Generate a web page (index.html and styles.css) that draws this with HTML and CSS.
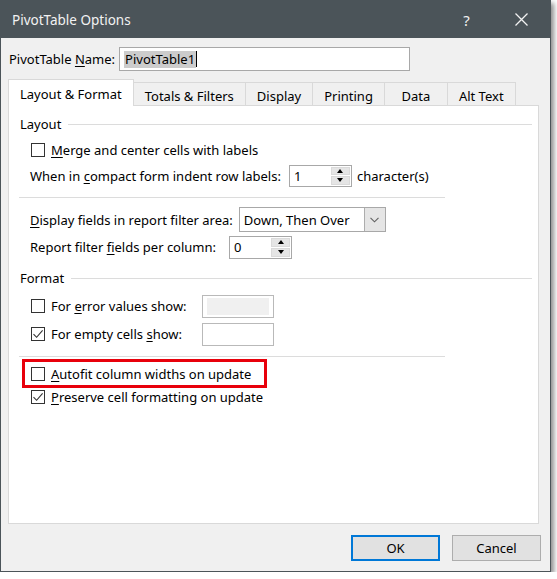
FILE: index.html
```html
<!DOCTYPE html>
<html>
<head>
<meta charset="utf-8">
<title>PivotTable Options</title>
<link rel="stylesheet" href="styles.css">
</head>
<body>
<div class="dialog">
  <div class="titlebar">
    <span class="title">PivotTable Options</span>
    <span class="caption-btn help">?</span>
    <span class="caption-btn close">
      <svg width="13" height="13" viewBox="0 0 13 13"><path d="M0.5 0.5 L12.5 12.5 M12.5 0.5 L0.5 12.5" stroke="#f2f2f2" stroke-width="1.3" fill="none"/></svg>
    </span>
  </div>
  <div class="content">
    <div class="name-row">
      <span class="name-label">PivotTable <u>N</u>ame:</span>
      <div class="name-box"><span class="selected">PivotTable1</span><span class="caret"></span></div>
    </div>
    <div class="tabs">
      <div class="tab active">Layout &amp; Format</div>
      <div class="tab">Totals &amp; Filters</div>
      <div class="tab">Display</div>
      <div class="tab">Printing</div>
      <div class="tab">Data</div>
      <div class="tab">Alt Text</div>
    </div>
    <div class="panel">
      <div class="group-head"><span>Layout</span><span class="rule"></span></div>
      <div class="row check-row merge-row"><span class="checkbox"></span><span><u>M</u>erge and center cells with labels</span></div>
      <div class="row text-row compact-row">
        <span>When in <u>c</u>ompact form indent row labels:</span>
        <div class="spinner compact-spin"><span class="spin-value">1</span><span class="spin-buttons"><span class="spin-btn"><span class="tri-up"></span></span><span class="spin-btn"><span class="tri-down"></span></span></span></div>
        <span class="unit">character(s)</span>
      </div>
      <div class="sep"></div>
      <div class="row text-row display-row">
        <span><u>D</u>isplay fields in report filter area:</span>
        <div class="dropdown"><span class="dd-value">Down, Then Over</span><span class="dd-arrow"><svg width="9" height="6" viewBox="0 0 9 6"><path d="M0.5 0.8 L4.5 4.8 L8.5 0.8" stroke="#606060" stroke-width="1.1" fill="none"/></svg></span></div>
      </div>
      <div class="row text-row report-row">
        <span>Report filter <u>f</u>ields per column:</span>
        <div class="spinner report-spin"><span class="spin-value">0</span><span class="spin-buttons"><span class="spin-btn"><span class="tri-up"></span></span><span class="spin-btn"><span class="tri-down"></span></span></span></div>
      </div>
      <div class="group-head format-head"><span>Format</span><span class="rule"></span></div>
      <div class="row check-row field-row">
        <span class="checkbox"></span><span class="field-label">For <u>e</u>rror values show:</span>
        <div class="field-box disabled"><span class="field-fill"></span></div>
      </div>
      <div class="row check-row field-row empty-row">
        <span class="checkbox checked"><svg width="12" height="12" viewBox="0 0 12 12"><path d="M1.5 6.2 L4.6 9.3 L10.6 2.3" stroke="#333" stroke-width="1.1" fill="none"/></svg></span><span class="field-label">For empty cells <u>s</u>how:</span>
        <div class="field-box"></div>
      </div>
      <div class="sep sep-lower"></div>
      <div class="highlight">
        <div class="row check-row inner-row"><span class="checkbox"></span><span><u>A</u>utofit column widths on update</span></div>
      </div>
      <div class="row check-row preserve-row"><span class="checkbox checked"><svg width="12" height="12" viewBox="0 0 12 12"><path d="M1.5 6.2 L4.6 9.3 L10.6 2.3" stroke="#333" stroke-width="1.1" fill="none"/></svg></span><span><u>P</u>reserve cell formatting on update</span></div>
    </div>
    <div class="buttons">
      <button class="btn btn-default">OK</button>
      <button class="btn">Cancel</button>
    </div>
  </div>
</div>
</body>
</html>
```

FILE: styles.css
```css
* { box-sizing: border-box; }
html, body { margin: 0; padding: 0; background: #ffffff; }
body {
  font-family: "Noto Sans", "Open Sans", sans-serif;
  font-size: 13px;
  color: #000;
}
u { text-decoration: underline; text-underline-offset: 2px; text-decoration-thickness: 1px; }

.dialog {
  width: 551px;
  height: 572px;
  border: 1px solid #4b5459;
  background: #f0f0f0;
  box-shadow: 3px 3px 5px rgba(0, 0, 0, 0.45);
  display: flex;
  flex-direction: column;
}

.titlebar {
  height: 37px;
  background: #4b5459;
  color: #f2f2f2;
  display: flex;
  align-items: center;
  padding-left: 11px;
  flex: none;
}
.title { flex: 1; font-size: 13.5px; }
.caption-btn {
  width: 55px;
  height: 37px;
  display: flex;
  align-items: center;
  justify-content: center;
}
.help { font-size: 15px; }
.close { margin-right: 1px; }

.content { flex: 1; display: flex; flex-direction: column; padding-left: 7px; }

.name-row {
  margin-top: 9px;
  height: 24px;
  display: flex;
  align-items: center;
  padding-left: 1px;
}
.name-label { margin-right: 4px; }
.name-box {
  width: 291px;
  height: 24px;
  border: 1px solid #a8a8a8;
  background: #fff;
  display: flex;
  align-items: center;
  padding-left: 4px;
}
.selected { background: #cccccc; padding: 0 1px; line-height: 17px; }
.caret { width: 1px; height: 16px; background: #000; }

.tabs {
  margin-top: 8px;
  height: 26px;
  display: flex;
  align-items: flex-end;
}
.tab {
  height: 23px;
  min-width: 64px;
  padding: 3px 11px 0;
  border: 1px solid #d9d9d9;
  border-bottom: none;
  margin-left: -1px;
  background: #f0f0f0;
  display: flex;
  align-items: center;
  justify-content: center;
}
.tab:first-child { margin-left: 0; }
.tab.active {
  height: 27px;
  padding: 1px 11px 0;
  background: #fff;
  margin-bottom: -1px;
  position: relative;
  z-index: 1;
}

.panel {
  width: 531px;
  height: 419px;
  background: #fff;
  border: 1px solid #d9d9d9;
  padding-top: 6px;
  display: flex;
  flex-direction: column;
}

.group-head {
  height: 24px;
  display: flex;
  align-items: center;
  padding-left: 11px;
  padding-right: 6px;
}
.group-head .rule { flex: 1; height: 1px; background: #dcdcdc; margin-left: 7px; }
.format-head { height: 32px; }

.row { display: flex; align-items: center; }
.text-row { padding-left: 21px; }
.check-row { padding-left: 22px; }
.merge-row { height: 28px; }
.compact-row { height: 23px; }
.display-row { height: 25px; }
.report-row { height: 30px; }
.field-row { height: 24px; }
.empty-row { margin-top: 4px; }
.preserve-row { height: 18px; }

.checkbox {
  width: 14px;
  height: 14px;
  border: 1px solid #333;
  background: #fff;
  margin-right: 6px;
  flex: none;
  display: flex;
  align-items: center;
  justify-content: center;
}

.sep { height: 1px; background: #dcdcdc; margin: 10px 0 9px 10px; width: 426px; }
.sep-lower { margin: 10px 0 0 10px; }

.spinner {
  height: 22px;
  border: 1px solid #a8a8a8;
  background: #fff;
  display: flex;
  align-items: center;
  justify-content: space-between;
}
.compact-spin { width: 63px; margin-left: 8px; }
.report-spin { width: 63px; height: 23px; margin-left: 13px; }
.spin-value { padding-left: 4px; }
.spin-buttons {
  width: 20px;
  height: 100%;
  display: flex;
  flex-direction: column;
  padding: 1px 1px 1px 0;
  gap: 1px;
}
.spin-btn {
  flex: 1;
  background: #e5e5e5;
  border: 1px solid #dadada;
  display: flex;
  align-items: center;
  justify-content: center;
}
.tri-up { width: 0; height: 0; border-left: 3.5px solid transparent; border-right: 3.5px solid transparent; border-bottom: 4px solid #000; }
.tri-down { width: 0; height: 0; border-left: 3.5px solid transparent; border-right: 3.5px solid transparent; border-top: 4px solid #000; }
.unit { margin-left: 5px; }

.dropdown {
  width: 147px;
  height: 25px;
  margin-left: 6px;
  border: 1px solid #a8a8a8;
  background: #fff;
  display: flex;
  align-items: stretch;
}
.dd-value { flex: 1; display: flex; align-items: center; padding-left: 4px; }
.dd-arrow {
  width: 21px;
  background: #e5e5e5;
  border-left: 1px solid #adadad;
  display: flex;
  align-items: center;
  justify-content: center;
}

.field-label { width: 151px; }
.field-box {
  width: 72px;
  height: 23px;
  border: 1px solid #b9b9b9;
  background: #fff;
  padding: 2px 4px;
  display: flex;
}
.field-fill { flex: 1; background: #f0f0f0; }

.highlight {
  margin: 2px 0 0 13px;
  width: 245px;
  height: 29px;
  border: 3px solid #e8000b;
  display: flex;
  align-items: center;
}
.inner-row { padding-left: 6px; height: 23px; }

.buttons {
  margin-top: 11px;
  display: flex;
  justify-content: flex-end;
  gap: 12px;
  padding-right: 9px;
}
.btn {
  width: 89px;
  height: 26px;
  font-family: inherit;
  font-size: 13px;
  color: #000;
  background: #e1e1e1;
  border: 1px solid #adadad;
  padding: 0;
}
.btn-default { border: 2px solid #0078d7; }
```
